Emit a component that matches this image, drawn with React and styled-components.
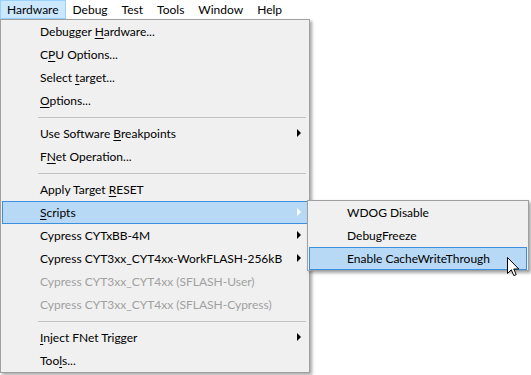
import styled, { createGlobalStyle } from "styled-components";

const GlobalStyle = createGlobalStyle`
    html, body {
        margin: 0;
        padding: 0;
        background: #ffffff;
    }
    body {
        font-family: 'Lato', 'Liberation Sans', sans-serif;
        font-size: 12px;
        color: #000000;
    }
`

const menuBar = ["Hardware", "Debug", "Test", "Tools", "Window", "Help"];

// label parts: [before, mnemonic, after]
const hardwareMenu = [
    { label: ["Debugger ", "H", "ardware..."] },
    { label: ["C", "P", "U Options..."] },
    { label: ["Select ", "t", "arget..."] },
    { label: ["", "O", "ptions..."] },
    { sep: true },
    { label: ["Use Software ", "B", "reakpoints"], sub: true },
    { label: ["F", "N", "et Operation..."] },
    { sep: true },
    { label: ["Apply Target ", "R", "ESET"] },
    { label: ["", "S", "cripts"], sub: true, hot: true, open: true },
    { label: ["Cypress CYTxBB-4M"], sub: true },
    { label: ["Cypress CYT3xx_CYT4xx-WorkFLASH-256kB"], sub: true },
    { label: ["Cypress CYT3xx_CYT4xx (SFLASH-User)"], disabled: true },
    { label: ["Cypress CYT3xx_CYT4xx (SFLASH-Cypress)"], disabled: true },
    { sep: true },
    { label: ["", "I", "nject FNet Trigger"], sub: true },
    { label: ["Too", "l", "s..."] },
];

const scriptsMenu = [
    { label: "WDOG Disable" },
    { label: "DebugFreeze" },
    { label: "Enable CacheWriteThrough", hot: true },
];

function Label({ parts }) {
    const [before, key, after] = parts;
    return (
        <span>
            {before}
            {key && <Key>{key}</Key>}
            {after}
        </span>
    )
}

export default function App() {
    return (
        <Screen>
            <GlobalStyle />
            <MenuBar>
                {menuBar.map((name, i) => (
                    <BarItem key={name} $active={i === 0}>{name}</BarItem>
                ))}
            </MenuBar>
            <Dropdown>
                {hardwareMenu.map((item, i) => {
                    if (item.sep) {
                        return <Separator key={i} />
                    }
                    return (
                        <MenuItem key={i} $hot={item.hot} $disabled={item.disabled}>
                            <Label parts={item.label} />
                            {item.sub && <Arrow $hot={item.hot} />}
                            {item.open && (
                                <SubMenu>
                                    {scriptsMenu.map((s) => (
                                        <MenuItem key={s.label} $hot={s.hot}>{s.label}</MenuItem>
                                    ))}
                                </SubMenu>
                            )}
                        </MenuItem>
                    )
                })}
            </Dropdown>
            <Pointer width="13" height="20" viewBox="0 0 13 20">
                <path d="M0.5 0.5 L0.5 16.5 L4.3 12.8 L6.8 18.6 L9.2 17.6 L6.8 12 L11.8 12 Z" fill="#ffffff" stroke="#000000" strokeWidth="1" strokeLinejoin="miter" />
            </Pointer>
        </Screen>
    )
}

const Screen = styled.div`
    position: relative;
    width: 531px;
    height: 375px;
    overflow: hidden;
    background: #ffffff;
`

const MenuBar = styled.div`
    display: flex;
    height: 19px;
    background: #ffffff;
`

const BarItem = styled.div`
    box-sizing: border-box;
    height: 19px;
    line-height: 17px;
    padding: 0 6px;
    border: 1px solid ${p => p.$active ? "#99d1ff" : "transparent"};
    background: ${p => p.$active ? "#cce8ff" : "transparent"};
`

const Dropdown = styled.div`
    position: absolute;
    top: 19px;
    left: 0;
    box-sizing: border-box;
    width: 310px;
    background: #f0f0f0;
    border: 1px solid #a0a0a0;
    box-shadow: 2px 2px 3px rgba(0, 0, 0, 0.35);
    display: flex;
    flex-direction: column;
`

const MenuItem = styled.div`
    position: relative;
    box-sizing: border-box;
    height: 23px;
    margin: 0 1px;
    padding-left: 37px;
    display: flex;
    align-items: center;
    white-space: nowrap;
    border: 1px solid ${p => p.$hot ? "#3c8fdd" : "transparent"};
    background: ${p => p.$hot ? "#b8d9f5" : "transparent"};
    color: ${p => p.$disabled ? "#a0a0a0" : "#000000"};
    padding-bottom: 1px;
`

const Key = styled.span`
    text-decoration: underline;
    text-underline-offset: 2px;
`

const Separator = styled.div`
    height: 10px;
    display: flex;
    align-items: center;
    &::after {
        content: "";
        flex: 1;
        height: 1px;
        margin: 0 3px 0 37px;
        background: #c3c3c3;
    }
`

const Arrow = styled.span`
    margin-left: auto;
    margin-right: 6px;
    width: 0;
    height: 0;
    border-top: 4px solid transparent;
    border-bottom: 4px solid transparent;
    border-left: 4px solid ${p => p.$hot ? "#ffffff" : "#000000"};
`

const SubMenu = styled.div`
    position: absolute;
    left: 100%;
    top: -2px;
    box-sizing: border-box;
    width: 222px;
    background: #f0f0f0;
    border: 1px solid #a0a0a0;
    box-shadow: 2px 2px 3px rgba(0, 0, 0, 0.35);
    display: flex;
    flex-direction: column;
`

const Pointer = styled.svg`
    position: absolute;
    left: 507px;
    top: 257px;
`
